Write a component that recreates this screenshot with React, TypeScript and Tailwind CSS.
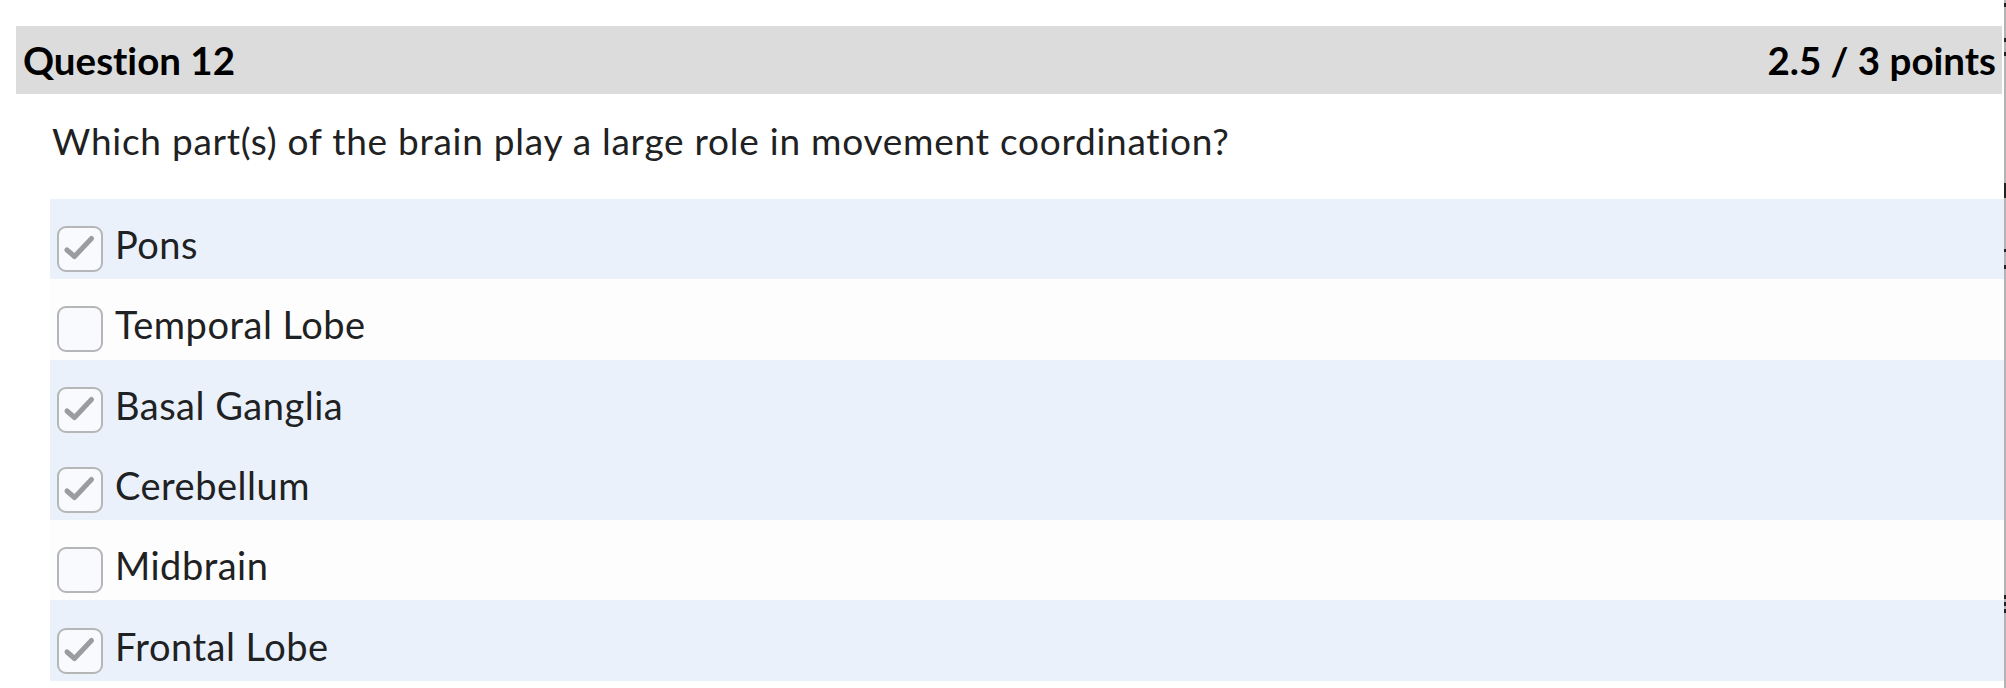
import React from "react";

type Option = { label: string; checked: boolean; shaded: boolean };

const options: Option[] = [
  { label: "Pons", checked: true, shaded: true },
  { label: "Temporal Lobe", checked: false, shaded: false },
  { label: "Basal Ganglia", checked: true, shaded: true },
  { label: "Cerebellum", checked: true, shaded: true },
  { label: "Midbrain", checked: false, shaded: false },
  { label: "Frontal Lobe", checked: true, shaded: true },
];

function CheckBox({ checked }: { checked: boolean }) {
  return (
    <div className="w-[46px] h-[46px] shrink-0 rounded-[9px] border-2 border-[#b4b6b8] bg-[#f8fafd] flex items-center justify-center">
      {checked && (
        <svg width="46" height="46" viewBox="0 0 46 46" className="-m-[2px]">
          <path
            d="M10 24 L17.5 30.5 L34.5 12.5"
            fill="none"
            stroke="#9b9c9e"
            strokeWidth="5"
            strokeLinecap="round"
            strokeLinejoin="round"
          />
        </svg>
      )}
    </div>
  );
}

export default function App() {
  return (
    <div
      className="w-[2006px] h-[688px] bg-white flex overflow-hidden text-[#202122] [font-variant-ligatures:none]"
      style={{ fontFamily: "Lato, 'Open Sans', sans-serif" }}
    >
      <div className="flex-1 flex flex-col pt-[26px]">
        {/* header */}
        <div className="ml-[16px] mr-[2px] h-[68px] bg-[#dcdcdc] flex items-center justify-between pl-[7px] pr-[6px] text-black">
          <h2 className="text-[38.5px] font-bold leading-none">Question 12</h2>
          <span className="text-[38.5px] font-bold leading-none">2.5 / 3 points</span>
        </div>

        {/* question */}
        <p className="ml-[52px] mt-[26px] text-[37px] leading-[42px] tracking-[0.75px]">
          Which part(s) of the brain play a large role in movement coordination?
        </p>

        {/* options */}
        <div className="ml-[50px] mt-[37px] flex flex-col">
          {options.map((o) => (
            <div
              key={o.label}
              className={`h-[80.3px] pt-[20px] pl-[7px] flex items-center gap-[12px] ${o.shaded ? "bg-[#eaf1fb]" : "bg-[#fdfdfd]"}`}
            >
              <CheckBox checked={o.checked} />
              <span className="text-[38px] leading-[44px] tracking-[0.5px] mb-[10px]">{o.label}</span>
            </div>
          ))}
        </div>
      </div>

      {/* scrollbar edge */}
      <div className="relative w-[2px] bg-[#b3b3b3]">
        <span className="absolute left-0 w-full top-[3px] h-[4px] bg-[#222]" />
        <span className="absolute left-0 w-full top-[38px] h-[4px] bg-[#222]" />
        <span className="absolute left-0 w-full top-[52px] h-[4px] bg-[#222]" />
        <span className="absolute left-0 w-full top-[183px] h-[15px] bg-[#222]" />
        <span className="absolute left-0 w-full top-[249px] h-[3px] bg-[#222]" />
        <span className="absolute left-0 w-full top-[265px] h-[4px] bg-[#222]" />
        <span className="absolute left-0 w-full top-[595px] h-[4px] bg-[#222]" />
        <span className="absolute left-0 w-full top-[602px] h-[4px] bg-[#222]" />
        <span className="absolute left-0 w-full top-[609px] h-[4px] bg-[#222]" />
      </div>
    </div>
  );
}
